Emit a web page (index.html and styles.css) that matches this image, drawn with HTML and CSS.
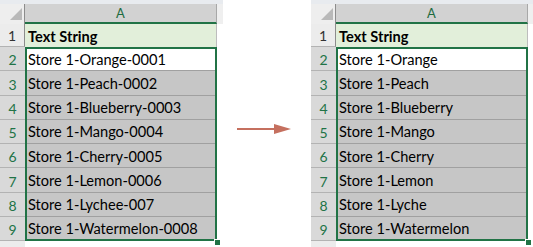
FILE: index.html
```html
<!DOCTYPE html>
<html>
<head>
<meta charset="utf-8">
<link rel="stylesheet" href="styles.css">
</head>
<body>
<div class="page">
  <div class="sheet">
    <div class="strip"></div>
    <div class="grid">
      <div class="rhcol">
        <div class="corner"><svg width="25" height="20" viewBox="0 0 25 20"><polygon points="22,4 22,16 10,16" fill="#b9b9b9"/></svg></div>
        <div class="rh r1">1</div>
        <div class="rh">2</div><div class="rh">3</div><div class="rh">4</div><div class="rh">5</div>
        <div class="rh">6</div><div class="rh">7</div><div class="rh">8</div><div class="rh">9</div>
        <div class="rh r10"></div>
      </div>
      <div class="acol">
        <div class="colhdr">A</div>
        <div class="cell head">Text String</div>
        <div class="selbox">
          <div class="cell active">Store 1-Orange-0001</div>
          <div class="cell">Store 1-Peach-0002</div>
          <div class="cell">Store 1-Blueberry-0003</div>
          <div class="cell">Store 1-Mango-0004</div>
          <div class="cell">Store 1-Cherry-0005</div>
          <div class="cell">Store 1-Lemon-0006</div>
          <div class="cell">Store 1-Lychee-007</div>
          <div class="cell">Store 1-Watermelon-0008</div>
          <span class="handle"></span>
        </div>
      </div>
      <div class="restcol"><div class="colrest"></div></div>
    </div>
  </div>

  <div class="arrowzone">
    <svg width="56" height="12" viewBox="0 0 56 12"><rect x="0" y="5" width="38" height="2" fill="#c5705f"/><polygon points="37,1 54,6 37,11" fill="#c5705f"/></svg>
  </div>

  <div class="sheet right">
    <div class="strip"></div>
    <div class="grid">
      <div class="rhcol">
        <div class="corner"><svg width="25" height="20" viewBox="0 0 25 20"><polygon points="22,4 22,16 10,16" fill="#b9b9b9"/></svg></div>
        <div class="rh r1">1</div>
        <div class="rh">2</div><div class="rh">3</div><div class="rh">4</div><div class="rh">5</div>
        <div class="rh">6</div><div class="rh">7</div><div class="rh">8</div><div class="rh">9</div>
        <div class="rh r10"></div>
      </div>
      <div class="acol">
        <div class="colhdr">A</div>
        <div class="cell head">Text String</div>
        <div class="selbox">
          <div class="cell active">Store 1-Orange</div>
          <div class="cell">Store 1-Peach</div>
          <div class="cell">Store 1-Blueberry</div>
          <div class="cell">Store 1-Mango</div>
          <div class="cell">Store 1-Cherry</div>
          <div class="cell">Store 1-Lemon</div>
          <div class="cell">Store 1-Lyche</div>
          <div class="cell">Store 1-Watermelon</div>
          <span class="handle"></span>
        </div>
      </div>
      <div class="restcol"><div class="colrest"></div></div>
    </div>
  </div>
</div>
</body>
</html>
```
FILE: styles.css
```css
* { box-sizing: border-box; }
html, body { margin: 0; padding: 0; background: #fff; }
body { font-family: Lato, "Open Sans", sans-serif; width: 533px; height: 247px; overflow: hidden; }

.page { display: flex; align-items: flex-start; }

.sheet { width: 223px; display: flex; flex-direction: column; }
.sheet.right { width: 222px; }

.strip { height: 4px; background: #e8ebef; }

.grid { display: flex; }
.rhcol { width: 25px; display: flex; flex-direction: column; }
.acol { width: 192px; display: flex; flex-direction: column; }
.restcol { flex: 1; display: flex; flex-direction: column; }

.corner { height: 20px; background: #eeeeee; border-right: 1px solid #8c8c8c; }
.corner svg { display: block; }
.colhdr {
  height: 20px;
  background: #d2d2d2;
  border-bottom: 2px solid #217346;
  border-right: 1px solid #a8a8a8;
  color: #1e6b3f;
  font-size: 13px;
  text-align: center;
  line-height: 18px;
}
.colrest { height: 20px; background: #efefef; }

.rh {
  height: 24.25px;
  background: #d9d9d9;
  border-bottom: 1px solid #b3b3b3;
  color: #217346;
  font-size: 14px;
  display: flex; align-items: flex-end; justify-content: center;
  padding-bottom: 3px;
  line-height: 1;
}
.rh.r1 { height: 23px; background: #ececec; color: #333; border-right: 1px solid #8c8c8c; }
.rh.r10 { height: 6px; background: #ececec; border-bottom: none; }

.cell {
  height: 24.25px;
  background: #c6c6c6;
  border-bottom: 1px solid #a0a0a0;
  font-size: 14.6px;
  color: #000;
  display: flex; align-items: flex-end;
  padding: 0 0 3px 3px;
  line-height: 1;
  white-space: nowrap;
}
.cell.head { height: 23px; background: #e2efda; font-weight: bold; border-bottom: none; border-right: 1px solid #bdbdbd; padding-bottom: 2px; }
.cell.active { background: #fff; }

.selbox {
  position: relative;
  outline: 2px solid #217346;
  outline-offset: -2px;
}
.handle {
  position: absolute;
  right: -4px; bottom: -5px;
  width: 7px; height: 7px;
  background: #217346;
  border: 1px solid #fff;
}

.arrowzone {
  width: 88px;
  height: 247px;
  display: flex;
  align-items: center;
  padding-left: 14px;
  padding-top: 10px;
}
.arrowzone svg { display: block; }
```
